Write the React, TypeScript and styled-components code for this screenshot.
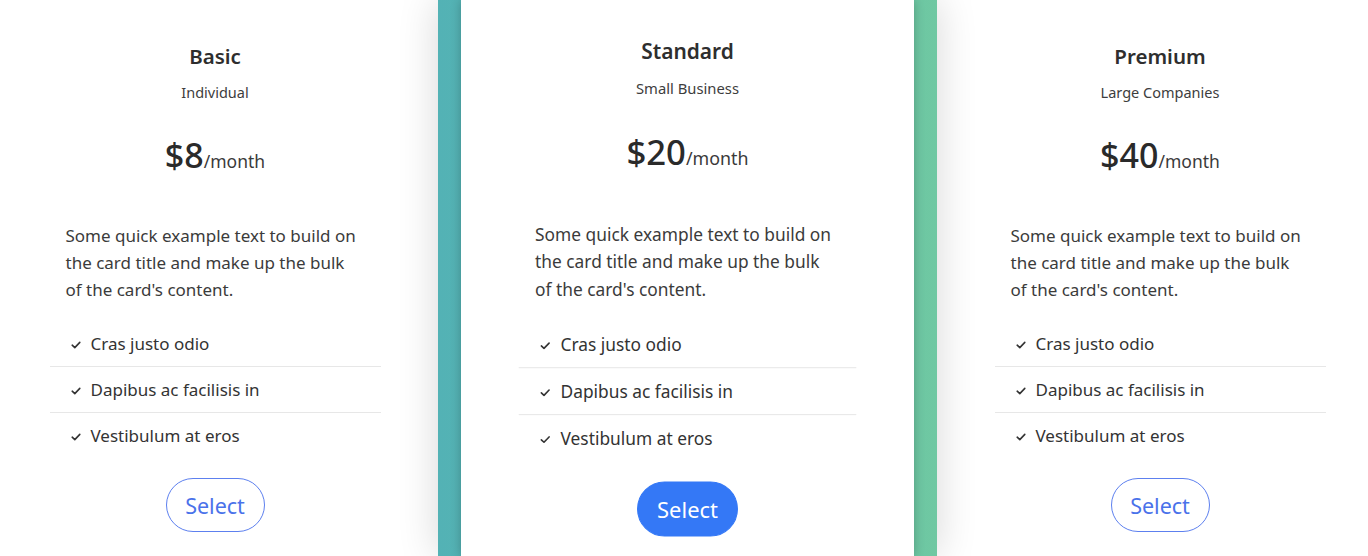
import React from "react";
import styled, { createGlobalStyle } from "styled-components";

const GlobalStyle = createGlobalStyle`
  html, body { margin: 0; padding: 0; background: #ffffff; overflow: hidden; }
  body { font-family: "Noto Sans", "Open Sans", Arial, sans-serif; color: #333; }
  * { box-sizing: border-box; }
`;

const Row = styled.div`
  display: flex;
  align-items: stretch;
  width: 1391px;
  height: 556px;
  margin-left: -8px;
`;

const SideColumn = styled.section`
  width: 446px;
  flex: none;
  background: #fff;
  padding: 0 57.5px;
`;

const FeaturedColumn = styled.section`
  width: 499px;
  flex: none;
  padding: 0 23px;
  background: linear-gradient(90deg, #53b2b5 0%, #60baad 50%, #6fc8a2 100%);
  box-shadow: 0 0 38px rgba(0, 0, 0, 0.16);
  position: relative;
  z-index: 1;
  display: flex;
`;

const FeaturedInner = styled.div`
  flex: 1;
  background: #fff;
  box-shadow: 0 0 10px rgba(0, 0, 0, 0.24);
  padding: 0 57.5px;
  display: flex;
  justify-content: center;
`;

const Content = styled.div<{ $featured?: boolean }>`
  width: 331px;
  flex: none;
  display: flex;
  flex-direction: column;
  align-items: center;
  padding-top: 44px;
  transform: ${(p) => (p.$featured ? "scale(1.02)" : "none")};
  transform-origin: 50% 307px;
`;

const Title = styled.h2`
  margin: 0;
  font-size: 20.5px;
  line-height: 24px;
  font-weight: 600;
  color: #2e2e2e;
`;

const Subtitle = styled.div`
  margin-top: 14px;
  font-size: 14.5px;
  line-height: 20px;
  color: #3d3d3d;
`;

const Price = styled.div`
  margin-top: 31px;
  display: flex;
  align-items: baseline;
  line-height: 44px;
  color: #2a2a2a;
`;

const Amount = styled.span`
  font-size: 34px;
  font-weight: 500;
`;

const Period = styled.span`
  font-size: 17.5px;
  color: #3a3a3a;
`;

const Description = styled.p`
  margin: 39px 0 0;
  align-self: stretch;
  padding: 0 16px;
  font-size: 17px;
  line-height: 27px;
  color: #3b3b3b;
`;

const Features = styled.ul`
  list-style: none;
  margin: 18px 0 0;
  padding: 0;
  align-self: stretch;
`;

const Feature = styled.li`
  display: flex;
  align-items: center;
  gap: 10px;
  padding: 10.5px 21px;
  font-size: 17px;
  line-height: 24px;
  color: #333;
  & + & {
    border-top: 1px solid #e7e7e7;
  }
`;

const Tick = styled.svg`
  width: 10px;
  height: 8px;
  flex: none;
  margin-top: 3px;
`;

const SelectButton = styled.button<{ $primary?: boolean }>`
  margin-top: 20px;
  width: 99px;
  height: 54px;
  border-radius: 27px;
  font-family: inherit;
  font-size: 21.5px;
  cursor: pointer;
  border: 1px solid ${(p) => (p.$primary ? "#3478f6" : "#5d80ef")};
  background: ${(p) => (p.$primary ? "#3478f6" : "#fff")};
  color: ${(p) => (p.$primary ? "#fff" : "#4a72ea")};
`;

const CheckIcon = () => (
  <Tick viewBox="0 0 10 8" aria-hidden="true">
    <path d="M1.2 4.2 L3.8 6.6 L8.8 1.4" fill="none" stroke="#333" strokeWidth="1.6" strokeLinecap="round" strokeLinejoin="round" />
  </Tick>
);

type Plan = { name: string; audience: string; price: string; featured?: boolean };

const plans: Plan[] = [
  { name: "Basic", audience: "Individual", price: "$8" },
  { name: "Standard", audience: "Small Business", price: "$20", featured: true },
  { name: "Premium", audience: "Large Companies", price: "$40" },
];

const features = ["Cras justo odio", "Dapibus ac facilisis in", "Vestibulum at eros"];

const PlanContent = ({ plan }: { plan: Plan }) => (
  <Content $featured={plan.featured}>
    <Title>{plan.name}</Title>
    <Subtitle>{plan.audience}</Subtitle>
    <Price>
      <Amount>{plan.price}</Amount>
      <Period>/month</Period>
    </Price>
    <Description>
      Some quick example text to build on the card title and make up the bulk of the card's content.
    </Description>
    <Features>
      {features.map((f) => (
        <Feature key={f}>
          <CheckIcon />
          {f}
        </Feature>
      ))}
    </Features>
    <SelectButton $primary={plan.featured}>Select</SelectButton>
  </Content>
);

export default function App() {
  return (
    <>
      <GlobalStyle />
      <Row>
        <SideColumn>
          <PlanContent plan={plans[0]} />
        </SideColumn>
        <FeaturedColumn>
          <FeaturedInner>
            <PlanContent plan={plans[1]} />
          </FeaturedInner>
        </FeaturedColumn>
        <SideColumn>
          <PlanContent plan={plans[2]} />
        </SideColumn>
      </Row>
    </>
  );
}
